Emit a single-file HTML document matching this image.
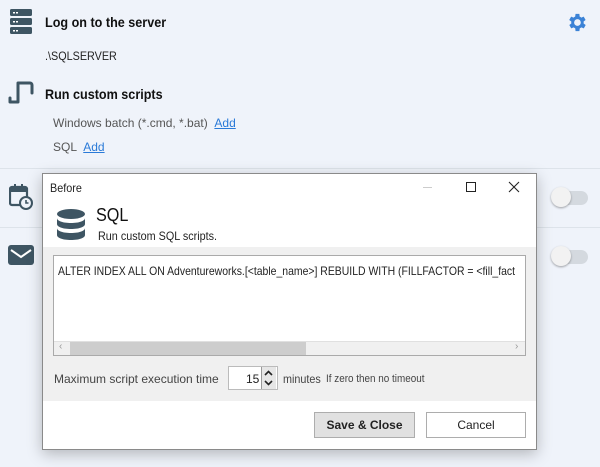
<!DOCTYPE html>
<html><head><meta charset="utf-8"><style>
*{margin:0;padding:0;box-sizing:border-box}
body{width:600px;height:467px;background:#eff3fa;font-family:"Liberation Sans",sans-serif;position:relative;overflow:hidden;color:#222}
.a{position:absolute;white-space:nowrap}
.n{transform:scaleX(.9);transform-origin:left center}
.link{color:#2a7ad8;text-decoration:underline}
</style></head><body>
<svg class="a" style="left:10px;top:9px" width="23" height="26" viewBox="0 0 23 26"><g fill="#3e5563"><rect x="0" y="0" width="22" height="7" rx="1.5"/><rect x="0" y="9" width="22" height="7" rx="1.5"/><rect x="0" y="18" width="22" height="7" rx="1.5"/></g><g fill="#fff"><rect x="3" y="3" width="2" height="1.5"/><rect x="6" y="3" width="2" height="1.5"/><rect x="3" y="12" width="2" height="1.5"/><rect x="6" y="12" width="2" height="1.5"/><rect x="3" y="21" width="2" height="1.5"/><rect x="6" y="21" width="2" height="1.5"/></g></svg>
<div class="a n" style="left:45px;top:14px;font-size:14px;font-weight:bold;color:#111">Log on to the server</div>
<svg class="a" style="left:565px;top:11px" width="23" height="23" viewBox="0 0 24 24"><path fill="#3b82d6" d="M19.4 13a7.5 7.5 0 0 0 0-2l2.1-1.6-2-3.5-2.5 1a7.6 7.6 0 0 0-1.7-1L15 3h-4l-.4 2.9a7.6 7.6 0 0 0-1.7 1l-2.5-1-2 3.5L6.6 11a7.5 7.5 0 0 0 0 2l-2.1 1.6 2 3.5 2.5-1a7.6 7.6 0 0 0 1.7 1L11 21h4l.4-2.9a7.6 7.6 0 0 0 1.7-1l2.5 1 2-3.5zM13 15.5a3.5 3.5 0 1 1 0-7 3.5 3.5 0 0 1 0 7z"/></svg>
<div class="a n" style="left:45px;top:49px;font-size:12px">.\SQLSERVER</div>
<svg class="a" style="left:8px;top:80px" width="26" height="26" viewBox="0 0 26 26"><path d="M10 22V3h12a2 2 0 0 1 2 2v8M2 22h8M2 22v-4" fill="none" stroke="#3e5563" stroke-width="3" stroke-linecap="round" stroke-linejoin="round"/></svg>
<div class="a n" style="left:45px;top:86px;font-size:14px;font-weight:bold;color:#111">Run custom scripts</div>
<div class="a" style="left:53px;top:116px;font-size:12px;color:#555">Windows batch (*.cmd, *.bat) &nbsp;<span class="link">Add</span></div>
<div class="a" style="left:53px;top:140px;font-size:12px;color:#555">SQL &nbsp;<span class="link">Add</span></div>
<div class="a" style="left:0;top:168px;width:600px;height:1px;background:#dde3ea"></div>
<div class="a" style="left:0;top:227px;width:600px;height:1px;background:#dde3ea"></div>
<svg class="a" style="left:9px;top:184px" width="24" height="26" viewBox="0 0 24 26"><rect x="1" y="3" width="17" height="18" rx="2" fill="none" stroke="#3e5563" stroke-width="2.2"/><rect x="1" y="3" width="17" height="5" fill="#3e5563"/><rect x="5" y="0" width="2" height="5" fill="#3e5563"/><rect x="12" y="0" width="2" height="5" fill="#3e5563"/><circle cx="17" cy="19" r="6" fill="#eff3fa" stroke="#3e5563" stroke-width="2"/><path d="M17 16v3h2.5" stroke="#3e5563" stroke-width="1.6" fill="none"/></svg>
<svg class="a" style="left:8px;top:245px" width="26" height="20" viewBox="0 0 26 20"><rect x="0" y="0" width="26" height="20" rx="3" fill="#3e5563"/><path d="M3 5l10 7 10-7" stroke="#fff" stroke-width="2" fill="none"/></svg>
<div class="a" style="left:552px;top:191px;width:36px;height:14px;border-radius:7px;background:#d4d9df"></div>
<div class="a" style="left:551px;top:187px;width:20px;height:20px;border-radius:50%;background:#f2f2f2;box-shadow:0 1px 2px rgba(0,0,0,.35)"></div>
<div class="a" style="left:552px;top:250px;width:36px;height:14px;border-radius:7px;background:#d4d9df"></div>
<div class="a" style="left:551px;top:246px;width:20px;height:20px;border-radius:50%;background:#f2f2f2;box-shadow:0 1px 2px rgba(0,0,0,.35)"></div>
<div class="a" style="left:42px;top:173px;width:495px;height:277px;background:#fff;border:1px solid #8a8a8a;box-shadow:0 4px 14px rgba(0,0,0,.25)">
 <div class="a n" style="left:7px;top:7px;font-size:12px">Before</div>
 <div class="a" style="left:380px;top:13px;width:9px;height:1px;background:#ccc"></div>
 <div class="a" style="left:423px;top:8px;width:10px;height:10px;border:1px solid #222"></div>
 <svg class="a" style="left:465px;top:7px" width="12" height="12"><path d="M1 1l10 10M11 1L1 11" stroke="#222" stroke-width="1.1"/></svg>
 <svg class="a" style="left:14px;top:35px" width="28" height="32" viewBox="0 0 28 32"><g fill="#3e5563"><ellipse cx="14" cy="5" rx="14" ry="5"/><path d="M0 9c0 3 6 5 14 5s14-2 14-5v6c0 3-6 5-14 5S0 18 0 15z"/><path d="M0 19c0 3 6 5 14 5s14-2 14-5v7c0 3-6 5-14 5S0 29 0 26z"/></g></svg>
 <div class="a n" style="left:53px;top:31px;font-size:18px;color:#111">SQL</div>
 <div class="a n" style="left:55px;top:55px;font-size:12px;color:#222">Run custom SQL scripts.</div>
 <div class="a" style="left:0;top:73px;width:493px;height:154px;background:#f0f0f0">
  <div class="a" style="left:10px;top:8px;width:473px;height:101px;background:#fff;border:1px solid #aaa;overflow:hidden">
   <div class="a" style="left:4px;top:8px;font-size:12px;transform:scaleX(.87);transform-origin:left center">ALTER INDEX ALL ON Adventureworks.[&lt;table_name&gt;] REBUILD WITH (FILLFACTOR = &lt;fill_fact</div>
   <div class="a" style="left:0;top:85px;width:471px;height:15px;background:#f0f0f0;border-top:1px solid #e0e0e0"></div>
   <div class="a" style="left:16px;top:86px;width:236px;height:14px;background:#cdcdcd"></div>
   <div class="a" style="left:5px;top:85px;font-size:10px;color:#999">‹</div>
   <div class="a" style="left:461px;top:85px;font-size:10px;color:#999">›</div>
  </div>
  <div class="a" style="left:11px;top:125px;font-size:12px;color:#444">Maximum script execution time</div>
  <div class="a" style="left:185px;top:119px;width:50px;height:24px;background:#fff;border:1px solid #bbb"></div>
  <div class="a" style="left:203px;top:125px;font-size:12px">15</div>
  <div class="a" style="left:218px;top:120px;width:15px;height:22px;background:#e6e6e6;border-left:1px solid #999"></div>
  <svg class="a" style="left:219px;top:121px" width="13" height="20"><path d="M3 7l3.5-3.5L10 7M3 13l3.5 3.5L10 13" stroke="#222" stroke-width="1.6" fill="none"/></svg>
  <div class="a n" style="left:240px;top:125px;font-size:12px;color:#444">minutes</div>
  <div class="a n" style="left:283px;top:126px;font-size:11px;color:#444">If zero then no timeout</div>
 </div>
 <div class="a" style="left:271px;top:238px;width:101px;height:26px;background:#e1e1e1;border:1px solid #adadad;font-size:12px;font-weight:bold;text-align:center;line-height:24px">Save &amp; Close</div>
 <div class="a" style="left:383px;top:238px;width:100px;height:26px;background:#fff;border:1px solid #adadad;font-size:12px;text-align:center;line-height:24px">Cancel</div>
</div>
</body></html>
